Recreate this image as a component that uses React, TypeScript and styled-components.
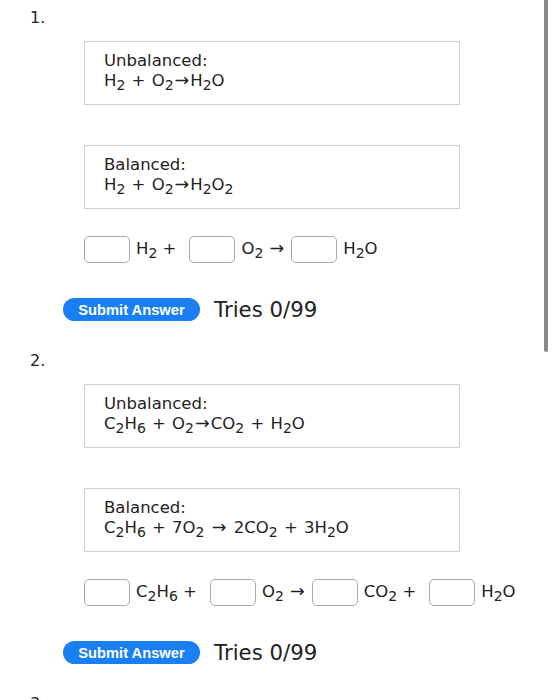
import React from "react";
import styled, { createGlobalStyle } from "styled-components";

const Global = createGlobalStyle`
  html, body { margin: 0; padding: 0; background: #fff; }
  body {
    font-family: "DejaVu Sans", Verdana, sans-serif;
    color: #222;
    overflow: hidden;
  }
`;

const Page = styled.div`
  padding-top: 8px;
  display: flex;
  flex-direction: column;
`;

const Question = styled.section`
  display: flex;
  flex-direction: column;
  height: 343px;
`;

const Number = styled.div`
  padding-left: 30px;
  font-size: 16px;
  line-height: 20px;
  height: 20px;
`;

const Body = styled.div`
  padding-left: 63px;
  display: flex;
  flex-direction: column;
`;

const EqBox = styled.div<{ $top: number }>`
  margin-left: 21px;
  margin-top: ${(p) => p.$top}px;
  width: 376px;
  height: 64px;
  box-sizing: border-box;
  border: 1px solid #cfcfcf;
  padding: 9px 19px 0 19px;
  font-size: 16.5px;
  line-height: 20px;
`;

const Line = styled.div`
  white-space: nowrap;
  word-spacing: 1px;
`;

const Sub = styled.span`
  font-size: 14px;
  line-height: 1;
  position: relative;
  top: 4px;
`;

const Arrow = styled.span`
  font-size: 17.5px;
  line-height: 1;
  margin: 0 1px;
`;

const Row = styled.div`
  margin-left: 21px;
  margin-top: 27px;
  display: flex;
  align-items: center;
  height: 27px;
  font-size: 16.5px;
  line-height: 20px;
  white-space: nowrap;
`;

const Blank = styled.input`
  width: 46px;
  height: 27px;
  box-sizing: border-box;
  border: 1px solid #a9a9a9;
  border-radius: 5px;
  margin: 0;
  padding: 0;
  background: #fff;
`;

const Species = styled.span<{ $after: number }>`
  margin-left: 6px;
  margin-right: ${(p) => p.$after}px;
`;

const Actions = styled.div`
  margin-top: 35px;
  display: flex;
  align-items: center;
  height: 24px;
`;

const SubmitButton = styled.button`
  width: 137px;
  height: 23px;
  border: none;
  border-radius: 12px;
  background: #1a7ff2;
  color: #fff;
  font-family: "Liberation Sans", Arial, sans-serif;
  font-weight: bold;
  font-size: 14.7px;
  padding: 0;
  display: flex;
  align-items: center;
  justify-content: center;
`;

const Tries = styled.span`
  margin-left: 14px;
  font-size: 21.3px;
  color: #222;
`;

const ScrollThumb = styled.div`
  position: fixed;
  top: 0;
  left: 544px;
  width: 4px;
  height: 352px;
  background: #8a8a8a;
  border-radius: 0 0 2px 2px;
`;

type Piece = string | { sub: string };

const Formula: React.FC<{ parts: Piece[] }> = ({ parts }) => (
  <>
    {parts.map((p, i) =>
      typeof p === "string" ? (
        p === "→" ? <Arrow key={i}>→</Arrow> : <React.Fragment key={i}>{p}</React.Fragment>
      ) : (
        <Sub key={i}>{p.sub}</Sub>
      )
    )}
  </>
);

type Term = { parts: Piece[]; op?: string; after: number };

const Q: React.FC<{
  n: number;
  unbalanced: Piece[];
  balanced: Piece[];
  terms: Term[];
}> = ({ n, unbalanced, balanced, terms }) => (
  <Question>
    <Number>{n}.</Number>
    <Body>
      <EqBox $top={12.5}>
        <Line>Unbalanced:</Line>
        <Line>
          <Formula parts={unbalanced} />
        </Line>
      </EqBox>
      <EqBox $top={40}>
        <Line>Balanced:</Line>
        <Line>
          <Formula parts={balanced} />
        </Line>
      </EqBox>
      <Row>
        {terms.map((t, i) => (
          <React.Fragment key={i}>
            <Blank type="text" aria-label="coefficient" />
            <Species $after={t.after}>
              <Formula parts={t.parts} />
              {t.op ? <>{"\u00a0"}{t.op === "→" ? <Arrow>→</Arrow> : t.op}</> : null}
            </Species>
          </React.Fragment>
        ))}
      </Row>
      <Actions>
        <SubmitButton>Submit Answer</SubmitButton>
        <Tries>Tries 0/99</Tries>
      </Actions>
    </Body>
  </Question>
);

export default function App() {
  return (
    <>
      <Global />
      <Page>
        <Q
          n={1}
          unbalanced={["H", { sub: "2" }, " + O", { sub: "2" }, "→", "H", { sub: "2" }, "O"]}
          balanced={["H", { sub: "2" }, " + O", { sub: "2" }, "→", "H", { sub: "2" }, "O", { sub: "2" }]}
          terms={[
            { parts: ["H", { sub: "2" }], op: "+", after: 13 },
            { parts: ["O", { sub: "2" }], op: "→", after: 6 },
            { parts: ["H", { sub: "2" }, "O"], after: 0 },
          ]}
        />
        <Q
          n={2}
          unbalanced={["C", { sub: "2" }, "H", { sub: "6" }, " + O", { sub: "2" }, "→", "CO", { sub: "2" }, " + H", { sub: "2" }, "O"]}
          balanced={["C", { sub: "2" }, "H", { sub: "6" }, " + 7O", { sub: "2" }, " ", "→", " 2CO", { sub: "2" }, " + 3H", { sub: "2" }, "O"]}
          terms={[
            { parts: ["C", { sub: "2" }, "H", { sub: "6" }], op: "+", after: 13 },
            { parts: ["O", { sub: "2" }], op: "→", after: 6 },
            { parts: ["CO", { sub: "2" }], op: "+", after: 13 },
            { parts: ["H", { sub: "2" }, "O"], after: 0 },
          ]}
        />
        <Question>
          <Number>3.</Number>
        </Question>
      </Page>
      <ScrollThumb />
    </>
  );
}
